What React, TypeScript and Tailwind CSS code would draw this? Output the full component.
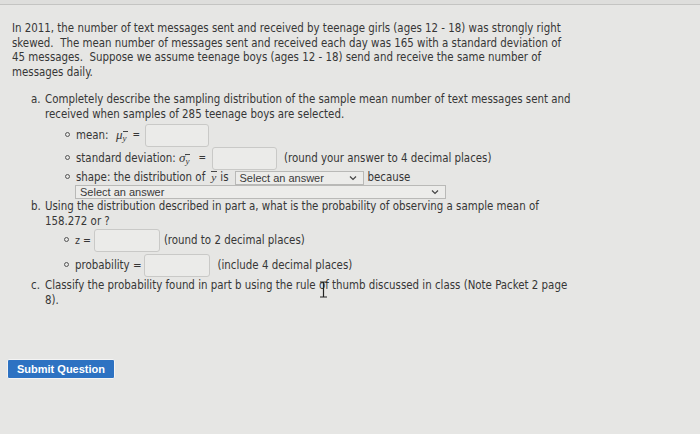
import React from 'react';

const Bullet = () => (
  <span className="inline-block w-[5px] h-[5px] rounded-full border border-[#555] mr-[6px] translate-y-[-1px]" />
);

const Box = ({ w = 'w-[65px]' }: { w?: string }) => (
  <span className={`inline-block ${w} h-[23px] align-middle rounded-[3px] border border-[#c9c9c7] bg-[#ebebe9]`} />
);

const Select = ({ w, label }: { w: string; label: string }) => (
  <span
    className={`inline-flex items-center justify-between ${w} h-[14px] align-middle border border-[#b9b9b7] bg-[#ececea] pl-[4px] pr-[6px] font-['Liberation_Sans',sans-serif] text-[11px] leading-[12px] text-[#3a3a3a]`}
  >
    <span>{label}</span>
    <svg width="8" height="6" viewBox="0 0 8 6" className="shrink-0">
      <path d="M1 1.5 L4 4.5 L7 1.5" fill="none" stroke="#444" strokeWidth="1.2" />
    </svg>
  </span>
);

const YBar = ({ small = false }: { small?: boolean }) => (
  <span className="relative inline-block italic font-['Liberation_Serif',serif]">
    <span className={`absolute left-[0px] ${small ? 'top-[0px] w-[5px]' : 'top-[1px] w-[6px]'} h-[1px] bg-[#444]`} />
    y
  </span>
);

export default function App() {
  return (
    <div className="relative w-[700px] h-[434px] overflow-hidden bg-[#e6e6e4] text-[#363636] font-['DejaVu_Sans_Condensed','DejaVu_Sans',sans-serif] text-[11.4px] leading-[14.5px]">
      <div className="h-[5px] border-b border-[#c4c4c2] bg-[#dededc]" />

      <div className="pl-[12px] pt-[16px]">
        <p>
          In 2011, the number of text messages sent and received by teenage girls (ages 12 - 18) was strongly right
          <br />
          skewed.&nbsp; The mean number of messages sent and received each day was 165 with a standard deviation of
          <br />
          45 messages.&nbsp; Suppose we assume teenage boys (ages 12 - 18) send and receive the same number of
          <br />
          messages daily.
        </p>

        <div className="mt-[13px] pl-[19px]">
          {/* part a */}
          <div className="flex">
            <span className="w-[14px] shrink-0">a.</span>
            <div>
              <p>
                Completely describe the sampling distribution of the sample mean number of text messages sent and
                <br />
                received when samples of 285 teenage boys are selected.
              </p>
              <div className="pl-[20px] mt-[2px]">
                <div className="flex items-center h-[24px]">
                  <Bullet />
                  <span>mean:&nbsp;&nbsp;</span>
                  <span className="ml-[1px] italic font-['Liberation_Serif',serif] text-[13px]">μ</span>
                  <span className="text-[9px] translate-y-[3px]"><YBar small /></span>
                  <span className="ml-[6px] mr-[5px] text-[10px]">=</span>
                  <Box w="w-[64px]" />
                </div>
                <div className="flex items-center h-[23px]">
                  <Bullet />
                  <span>standard deviation:&nbsp;</span>
                  <span className="italic font-['Liberation_Serif',serif] text-[13px]">σ</span>
                  <span className="text-[9px] translate-y-[3px]"><YBar small /></span>
                  <span className="ml-[9px] mr-[6px] text-[10px]">=</span>
                  <Box w="w-[65px]" />
                  <span className="ml-[7px]">(round your answer to 4 decimal places)</span>
                </div>
                <div className="flex items-center h-[15px]">
                  <Bullet />
                  <span>shape: the distribution of</span>
                  <span className="ml-[6px] mr-[4px]"><YBar /></span>
                  <span>is</span>
                  <Select w="w-[129px] ml-[6px]" label="Select an answer" />
                  <span className="ml-[4px]">because</span>
                </div>
                <div className="flex items-center h-[14px] pl-[10px]">
                  <Select w="w-[371px]" label="Select an answer" />
                </div>
              </div>
            </div>
          </div>

          {/* part b */}
          <div className="flex">
            <span className="w-[14px] shrink-0">b.</span>
            <div>
              <p>
                Using the distribution described in part a, what is the probability of observing a sample mean of
                <br />
                158.272 or ?
              </p>
              <div className="pl-[19px]">
                <div className="flex items-center h-[24px] text-[10.5px]">
                  <Bullet />
                  <span className="mr-[3px]">z =</span>
                  <Box w="w-[66px]" />
                  <span className="ml-[4px] text-[11.4px]">(round to 2 decimal places)</span>
                </div>
                <div className="flex items-center h-[26px]">
                  <Bullet />
                  <span className="mr-[2px]">probability =</span>
                  <Box w="w-[66px]" />
                  <span className="ml-[8px]">(include 4 decimal places)</span>
                </div>
              </div>
            </div>
          </div>

          {/* part c */}
          <div className="flex">
            <span className="w-[14px] shrink-0">c.</span>
            <p>
              Classify the probability found in part b using the rule of thumb discussed in class (Note Packet 2 page
              <br />
              8).
            </p>
          </div>
        </div>

        <button className="mt-[52px] -ml-[5px] h-[20px] px-[9px] rounded-[2px] bg-[#2d72c2] text-white font-bold font-['Liberation_Sans',sans-serif] text-[11px] leading-[18px] border border-[#f4f4f4]">
          Submit Question
        </button>
      </div>

      {/* text cursor */}
      <svg className="absolute left-[319px] top-[281px]" width="9" height="17" viewBox="0 0 9 17">
        <path d="M1 1 H8 M4.5 1 V16 M1 16 H8" fill="none" stroke="#222" strokeWidth="1.2" />
      </svg>
    </div>
  );
}
